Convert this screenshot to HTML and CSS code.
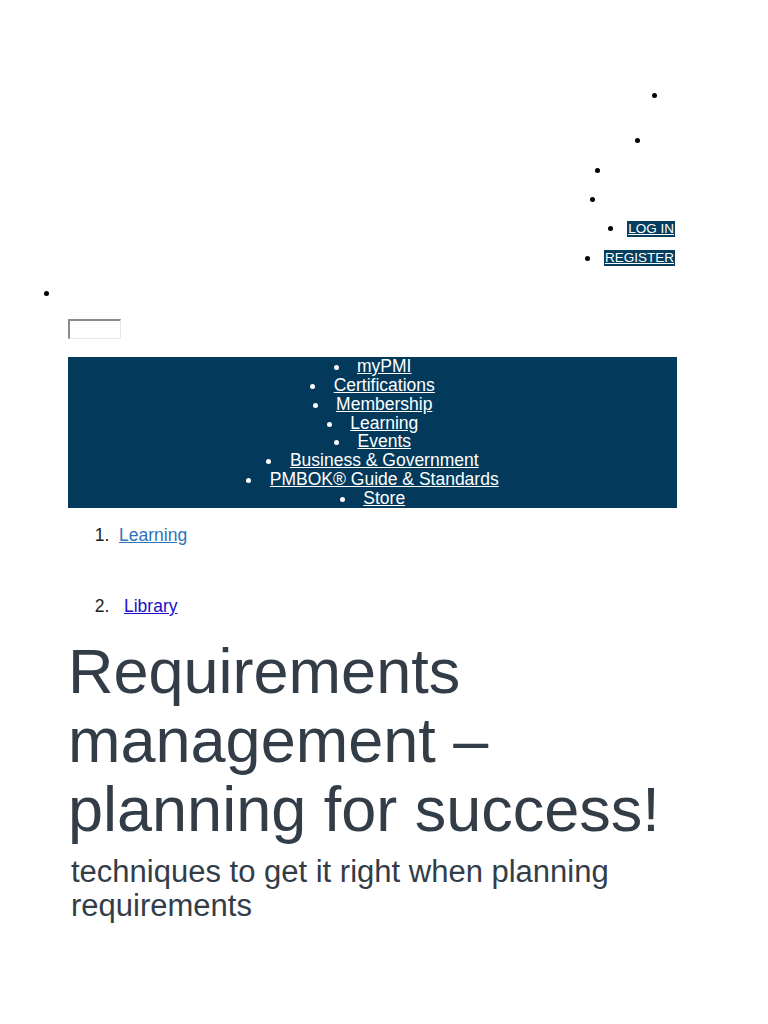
FILE: index.html
```html
<!DOCTYPE html>
<html lang="en">
<head>
<meta charset="utf-8">
<title>Requirements management – planning for success!</title>
<link rel="stylesheet" href="styles.css">
</head>
<body>
<div class="page">
  <ul class="util">
    <li class="u u1"><span class="dot"></span><span class="sp"></span></li>
    <li class="u u2"><span class="dot"></span><span class="sp"></span></li>
    <li class="u u3"><span class="dot"></span><span class="sp"></span></li>
    <li class="u u4"><span class="dot"></span><span class="sp"></span></li>
    <li class="u u5"><span class="dot"></span><a class="btn" href="#">LOG IN</a></li>
    <li class="u u6"><span class="dot"></span><a class="btn" href="#">REGISTER</a></li>
  </ul>
  <div class="lone"><span class="dot"></span></div>
  <div class="search"><input class="sbox" type="text" aria-label="Search"></div>
  <nav class="mainnav">
    <ul>
      <li><a href="#">myPMI</a></li>
      <li><a href="#">Certifications</a></li>
      <li><a href="#">Membership</a></li>
      <li><a href="#">Learning</a></li>
      <li><a href="#">Events</a></li>
      <li><a href="#">Business &amp; Government</a></li>
      <li><a href="#">PMBOK® Guide &amp; Standards</a></li>
      <li><a href="#">Store</a></li>
    </ul>
  </nav>
  <ol class="crumbs">
    <li class="c1"><a class="l1" href="#">Learning</a></li>
    <li class="c2"><a class="l2" href="#">Library</a></li>
  </ol>
  <h1 class="title">Requirements management – planning for success!</h1>
  <p class="sub">techniques to get it right when planning requirements</p>
</div>
</body>
</html>
```
FILE: styles.css
```css
html, body {
  margin: 0;
  padding: 0;
  background: #ffffff;
}
body {
  font-family: "Liberation Sans", Arial, sans-serif;
  font-size: 16px;
  color: #000;
}
.page {
  margin-left: 68px;
  width: 609px;
}
.util {
  list-style: none;
  margin: 0;
  padding: 81px 0 0 0;
}
.u {
  display: flex;
  justify-content: flex-end;
  align-items: center;
  height: 29.3px;
}
.u1 { margin-bottom: 16px; }
.dot {
  display: inline-block;
  width: 5px;
  height: 5px;
  border-radius: 50%;
  background: #000;
}
.sp { display: inline-block; height: 1px; }
.u1 .sp { width: 20px; }
.u2 .sp { width: 37px; }
.u3 .sp { width: 77px; }
.u4 .sp { width: 82px; }
.u5 .btn { margin-left: 14px; margin-right: 2px; }
.u6 .btn { margin-left: 14px; margin-right: 2px; }
.btn {
  background: #063e60;
  color: #ffffff;
  font-size: 13.5px;
  line-height: 16px;
  padding: 0 1px;
  text-decoration: underline;
}
.lone {
  margin-left: -24px;
  margin-top: 6px;
  height: 29px;
  display: flex;
  align-items: center;
}
.search {
  margin-top: 11px;
}
.sbox {
  display: block;
  box-sizing: border-box;
  width: 53px;
  height: 20px;
  margin: 0;
  padding: 0;
  border-style: solid;
  border-width: 2px 1px 1px 2px;
  border-color: #8a8a8a #e6e6e6 #e6e6e6 #8a8a8a;
  background: #fff;
}
.mainnav {
  margin-top: 18px;
  background: #033a5c;
}
.mainnav ul {
  list-style: disc inside;
  margin: 0;
  padding: 0;
  text-align: center;
  color: #ffffff;
}
.mainnav li {
  line-height: 18.9px;
  font-size: 17.5px;
}
.mainnav a {
  color: #ffffff;
  text-decoration: underline;
}
.crumbs {
  margin: 18px 0 0 0;
  padding-left: 51px;
  font-size: 17.5px;
  color: #222;
}
.crumbs li {
  line-height: 19px;
}
.crumbs li::marker {
  content: counter(list-item) ".\00a0\00a0";
}
.c1 { margin-bottom: 52px; }
.c2 a { margin-left: 5px; }
.l1 { color: #2e73b9; }
.l2 { color: #1a0dcc; }
.title {
  margin: 21px 0 0 0;
  font-weight: 400;
  font-size: 63px;
  line-height: 69px;
  color: #323d48;
}
.sub {
  margin: 11px 0 0 3px;
  font-size: 31px;
  line-height: 34px;
  color: #323d48;
}
```
